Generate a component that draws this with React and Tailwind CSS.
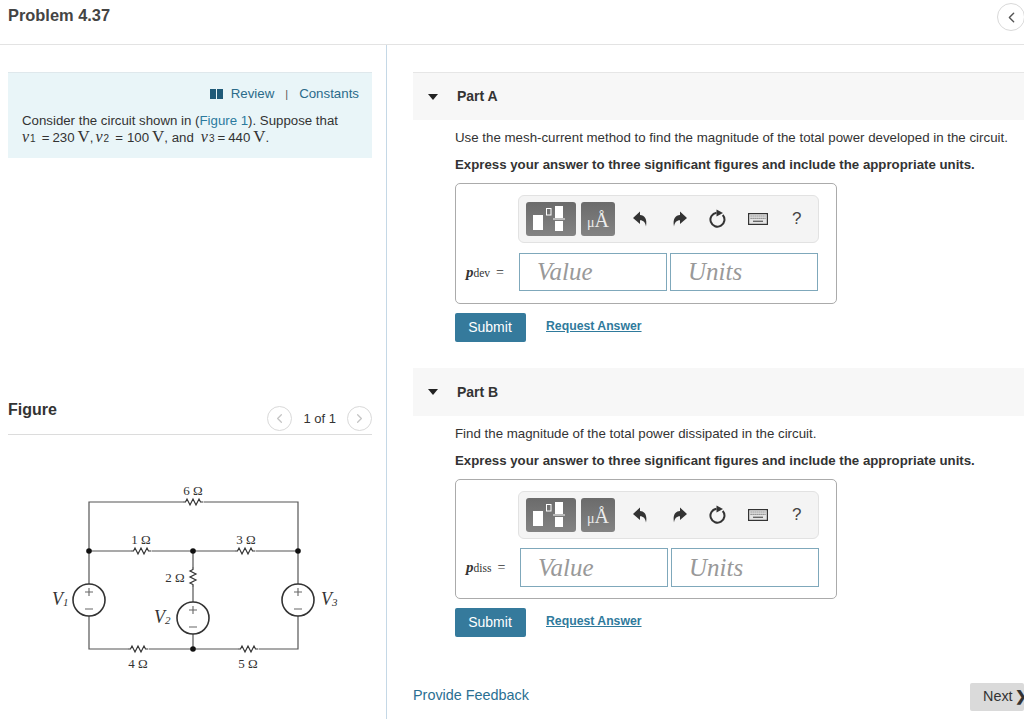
import { ChevronLeft, ChevronRight } from "lucide-react";

const serif = "font-['Liberation_Serif',serif]";

function Resistor({ x, y }) {
  // horizontal zig-zag sitting on a wire, the rect hides the wire under it
  return (
    <g>
      <rect x={x} y={y - 2} width="20.5" height="4" fill="#fff" />
      <path
        d={`M${x} ${y} l2.5 0 l1.5 -3 l3 6 l3 -6 l3 6 l3 -6 l1.5 3 l2.5 0`}
        fill="none"
        stroke="#333"
        strokeWidth="1.2"
      />
    </g>
  );
}

function Source({ cx, cy }) {
  return (
    <g>
      <circle cx={cx} cy={cy} r="16" fill="#fff" stroke="#333" strokeWidth="1.6" />
      <path d={`M${cx - 4} ${cy - 8} h8 M${cx} ${cy - 12} v8 M${cx - 4} ${cy + 9} h8`} stroke="#666" strokeWidth="1.1" />
    </g>
  );
}

function Circuit() {
  const labels = [
    ["6 Ω", 163, 25],
    ["1 Ω", 111, 74],
    ["3 Ω", 216, 74],
    ["2 Ω", 145, 112],
    ["4 Ω", 108, 198],
    ["5 Ω", 218, 198],
  ];
  return (
    <svg width="320" height="210" viewBox="0 0 320 210" className="block">
      <path d="M59 130 V32 H268 V130 M59 81 H268 M163 81 V148 M59 130 V179 H268 V130 M163 148 V179" fill="none" stroke="#555" strokeWidth="1.2" />
      <Resistor x={153} y={32} />
      <Resistor x={101} y={81} />
      <Resistor x={205} y={81} />
      <Resistor x={98} y={179} />
      <Resistor x={208} y={179} />
      <rect x="161" y="97" width="4" height="20" fill="#fff" />
      <path d="M163 97 v2.5 l-3 1.5 l6 3 l-6 3 l6 3 l-6 3 l3 1.5 v2.5" fill="none" stroke="#333" strokeWidth="1.2" />
      <circle cx="59" cy="81" r="2.8" fill="#111" />
      <circle cx="163" cy="81" r="2.8" fill="#111" />
      <circle cx="268" cy="81" r="2.8" fill="#111" />
      <circle cx="163" cy="179" r="2.8" fill="#111" />
      <Source cx={59} cy={130} />
      <Source cx={163} cy={148} />
      <Source cx={268} cy={130} />
      <g fontFamily="Liberation Serif, serif" fill="#333">
        {labels.map(([t, x, y]) => (
          <text key={t} x={x} y={y} fontSize="13" textAnchor="middle">{t}</text>
        ))}
        <text x="22" y="135" fontSize="18" fontStyle="italic">V<tspan fontSize="11" dy="1">1</tspan></text>
        <text x="124" y="153" fontSize="18" fontStyle="italic">V<tspan fontSize="11" dy="1">2</tspan></text>
        <text x="291" y="135" fontSize="18" fontStyle="italic">V<tspan fontSize="11" dy="1">3</tspan></text>
      </g>
    </svg>
  );
}

function Toolbar() {
  return (
    <div className="flex h-[48px] w-[301px] items-center rounded-[6px] border border-[#e2e2e2] bg-[#f4f4f4] pl-[7px]">
      <div className="flex h-[34px] w-[50px] rounded-[3px] bg-linear-to-b from-[#6b6b6b] to-[#838383]">
        <svg width="50" height="34" viewBox="0 0 50 34">
          <rect x="7" y="13" width="10" height="15" fill="#fff" />
          <rect x="20.5" y="6.5" width="4.5" height="6.5" fill="none" stroke="#fff" strokeWidth="1" />
          <rect x="29" y="4" width="8" height="12" fill="#fff" />
          <rect x="27" y="16.5" width="12" height="1" fill="#fff" />
          <rect x="29" y="19" width="8" height="10" fill="#fff" />
        </svg>
      </div>
      <div className={`ml-[5px] flex h-[34px] w-[34px] items-baseline justify-center rounded-[3px] bg-linear-to-b from-[#6b6b6b] to-[#838383] pt-[6px] text-[#ececec] ${serif}`}>
        <span className="text-[14px]">μ</span>
        <span className="text-[20px] leading-[24px]">Å</span>
      </div>
      <svg className="ml-[17px]" width="16" height="16" viewBox="0 0 16 16">
        <path d="M1 7 L8 0.5 V4 C12.5 4 15.5 8 14 15.5 C13.3 11.5 11.5 9.3 8 9.3 V13 Z" fill="#333" />
      </svg>
      <svg className="ml-[24px]" width="16" height="16" viewBox="0 0 16 16">
        <path d="M15 7 L8 0.5 V4 C3.5 4 0.5 8 2 15.5 C2.7 11.5 4.5 9.3 8 9.3 V13 Z" fill="#333" />
      </svg>
      <svg className="ml-[21px]" width="18" height="20" viewBox="0 0 18 20">
        <path d="M13.7 6 A7 7 0 1 1 7.5 3.7" fill="none" stroke="#333" strokeWidth="2" />
        <path d="M7.5 0.5 L14 4 L7.5 7.5 Z" fill="#333" />
      </svg>
      <svg className="ml-[21px]" width="20" height="12" viewBox="0 0 20 12">
        <rect x="0.6" y="0.6" width="18.8" height="10.8" fill="#e4e4e4" stroke="#333" strokeWidth="1.2" />
        <path d="M2.5 3 h15 M2.5 5.3 h15" stroke="#777" strokeWidth="1.2" strokeDasharray="1.2 0.8" />
        <path d="M5 8.3 h10" stroke="#666" strokeWidth="1.4" />
      </svg>
      <span className="ml-[24px] text-[17px] text-[#444]">?</span>
    </div>
  );
}

function AnswerBox({ sub, boxH, labelW, rowMt, inputH }) {
  return (
    <div className={`w-[382px] rounded-[5px] border border-[#ababab] pt-[11px] ${boxH}`}>
      <div className="ml-[62px]">
        <Toolbar />
      </div>
      <div className={`ml-[10px] flex items-center ${rowMt}`}>
        <div className={`flex items-baseline text-[#333] ${labelW} ${serif}`}>
          <span className="text-[15px] font-bold italic">p</span>
          <span className="text-[11.5px]">{sub}</span>
          <span className="ml-[6px] text-[14px]">=</span>
        </div>
        <div className={`flex w-[148px] items-center border border-[#7fa8bb] pl-[17px] text-[25px] italic text-[#999] ${inputH} ${serif}`}>Value</div>
        <div className={`ml-[3px] flex w-[148px] items-center border border-[#7fa8bb] pl-[17px] text-[25px] italic text-[#999] ${inputH} ${serif}`}>Units</div>
      </div>
    </div>
  );
}

function Part({ name, question, sub, boxH, labelW, headBorder, rowMt, inputH }) {
  return (
    <div>
      <div className={`flex h-[48px] items-center bg-[#f7f7f7] pl-[15px] ${headBorder}`}>
        <span className="h-0 w-0 border-x-[5.5px] border-t-[6px] border-x-transparent border-t-[#222]" />
        <span className="ml-[19px] text-[14px] font-bold text-[#333]">{name}</span>
      </div>
      <div className="pl-[42px]">
        <p className="mt-[9px] text-[13.3px] leading-[18px] text-[#333]">{question}</p>
        <p className="mt-[9px] mb-[9px] text-[13.25px] leading-[18px] font-bold text-[#333]">
          Express your answer to three significant figures and include the appropriate units.
        </p>
        <AnswerBox sub={sub} boxH={boxH} labelW={labelW} rowMt={rowMt} inputH={inputH} />
        <div className="mt-[9px] flex items-center">
          <div className="flex h-[29px] w-[71px] items-center justify-center rounded-[2px] bg-[#357a9c] pr-[1px] text-[14px] text-white">Submit</div>
          <span className="mb-[3px] ml-[20px] text-[12.25px] font-bold text-[#2f7a9c] underline">Request Answer</span>
        </div>
      </div>
    </div>
  );
}

function RoundBtn({ children, size }) {
  return (
    <div className={`flex items-center justify-center rounded-full border border-[#d9d9d9] bg-white ${size}`}>
      {children}
    </div>
  );
}

function MathVar({ n, ml, eqMl }) {
  return (
    <>
      <i className={`${ml} text-[16px] ${serif}`}>v</i>
      <span className="ml-[1px] text-[10px]">{n}</span>
      <span className={eqMl}>=</span>
    </>
  );
}

function Volts() {
  return <span className={`ml-[3px] text-[17px] ${serif}`}>V</span>;
}

export default function App() {
  return (
    <div className="h-[719px] w-[1024px] overflow-hidden bg-white font-['Liberation_Sans',sans-serif] text-[#333]">
      {/* HEADER */}
      <div className="flex h-[45px] items-start justify-between border-b border-[#e3e3e3] pl-2">
        <h1 className="mt-[5px] text-[16.4px] leading-[20px] font-bold text-[#444]">Problem 4.37</h1>
        <div className="mt-[3px] -mr-[1px]">
          <RoundBtn size="h-[28px] w-[28px]">
            <ChevronLeft size={17} className="text-[#555]" />
          </RoundBtn>
        </div>
      </div>

      <div className="flex h-[674px]">
        {/* LEFT COLUMN */}
        <div className="w-[387px] shrink-0 border-r border-[#c5d8e6] pt-[27px] pl-2 pr-[14px]">
          <div className="h-[86px] border-t border-[#dfe8ec] bg-[#e9f5f8] pl-[14px] pr-[13px]">
            <div className="mt-[12px] flex items-center justify-end text-[13.3px] leading-[18px] text-[#2b6b8a]">
              <svg width="13" height="10" viewBox="0 0 13 10">
                <path d="M0 0 H6 V10 H0 Z M7 0 H13 V10 H7 Z" fill="#1f5a78" />
              </svg>
              <span className="ml-[8px]">Review</span>
              <span className="mx-[11px] text-[11px] text-[#555]">|</span>
              <span>Constants</span>
            </div>
            <p className="mt-[10px] text-[13.25px] leading-[16px] text-[#333]">
              Consider the circuit shown in (<span className="text-[#2b7a9e]">Figure 1</span>). Suppose that
            </p>
            <p className="text-[13.25px] leading-[16px] whitespace-nowrap text-[#333]">
              <MathVar n="1" ml="" eqMl="ml-[6px]" />
              <span className="ml-[3px]">230</span>
              <Volts />,
              <MathVar n="2" ml="ml-[2px]" eqMl="ml-[6px]" />
              <span className="ml-[4px]">100</span>
              <Volts />, and
              <MathVar n="3" ml="ml-[7px]" eqMl="ml-[3px]" />
              <span className="ml-[3px]">440</span>
              <Volts />.
            </p>
          </div>

          <div className="mt-[240px] flex h-[37px] items-center justify-between border-b border-[#dcdcdc]">
            <h2 className="-mt-[13px] text-[16px] font-bold text-[#333]">Figure</h2>
            <div className="mt-[5px] flex items-center">
              <RoundBtn size="h-[25px] w-[25px]">
                <ChevronLeft size={15} className="text-[#c4c4c4]" />
              </RoundBtn>
              <span className="mx-[11px] text-[13px] text-[#333]">1 of 1</span>
              <RoundBtn size="h-[25px] w-[25px]">
                <ChevronRight size={15} className="text-[#c4c4c4]" />
              </RoundBtn>
            </div>
          </div>

          <div className="mt-[35px] ml-[22px]">
            <Circuit />
          </div>
        </div>

        {/* RIGHT COLUMN */}
        <div className="min-w-0 flex-1 pt-[27px] pl-[26px]">
          <Part
            name="Part A"
            question="Use the mesh-current method to find the magnitude of the total power developed in the circuit."
            sub="dev"
            boxH="h-[121px]"
            labelW="w-[53px]"
            headBorder="border-t border-[#e6e6e6]"
            rowMt="mt-[10px]"
            inputH="h-[38px]"
          />
          <div className="h-[26px]" />
          <Part
            name="Part B"
            question="Find the magnitude of the total power dissipated in the circuit."
            sub="diss"
            boxH="h-[120px]"
            labelW="w-[54px]"
            headBorder=""
            rowMt="mt-[9px]"
            inputH="h-[39px]"
          />
          <div className="mt-[46px] flex items-center justify-between">
            <span className="mb-[3px] text-[14.4px] text-[#2b6f92]">Provide Feedback</span>
            <div className="flex h-[28px] w-[54px] shrink-0 items-center whitespace-nowrap rounded-[2px] bg-[#dadada] pl-[13px] text-[14.4px] text-[#333]">
              Next<span className="ml-[2px] font-bold">❯</span>
            </div>
          </div>
        </div>
      </div>
    </div>
  );
}
